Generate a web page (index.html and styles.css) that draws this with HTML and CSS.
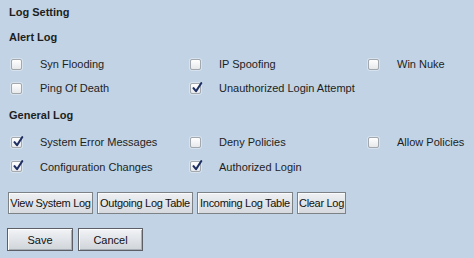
FILE: index.html
```html
<!DOCTYPE html>
<html>
<head>
<meta charset="utf-8">
<link rel="stylesheet" href="styles.css">
</head>
<body>
<div class="page">
  <div class="title">Log Setting</div>
  <div class="section">Alert Log</div>
  <div class="grid">
    <label class="item"><span class="cb"></span><span class="lbl">Syn Flooding</span></label>
    <label class="item"><span class="cb"></span><span class="lbl">IP Spoofing</span></label>
    <label class="item"><span class="cb"></span><span class="lbl">Win Nuke</span></label>
    <label class="item"><span class="cb"></span><span class="lbl">Ping Of Death</span></label>
    <label class="item"><span class="cb checked"><svg viewBox="0 0 12 12" width="12" height="12"><path d="M2.5 6.2 L5 9.2 L10.2 1.2" fill="none" stroke="#1d2e63" stroke-width="2.1" stroke-linejoin="round" stroke-linecap="round"/></svg></span><span class="lbl">Unauthorized Login Attempt</span></label>
    <span></span>
  </div>
  <div class="section gen">General Log</div>
  <div class="grid general">
    <label class="item"><span class="cb checked"><svg viewBox="0 0 12 12" width="12" height="12"><path d="M2.5 6.2 L5 9.2 L10.2 1.2" fill="none" stroke="#1d2e63" stroke-width="2.1" stroke-linejoin="round" stroke-linecap="round"/></svg></span><span class="lbl">System Error Messages</span></label>
    <label class="item"><span class="cb"></span><span class="lbl">Deny Policies</span></label>
    <label class="item"><span class="cb"></span><span class="lbl">Allow Policies</span></label>
    <label class="item"><span class="cb checked"><svg viewBox="0 0 12 12" width="12" height="12"><path d="M2.5 6.2 L5 9.2 L10.2 1.2" fill="none" stroke="#1d2e63" stroke-width="2.1" stroke-linejoin="round" stroke-linecap="round"/></svg></span><span class="lbl">Configuration Changes</span></label>
    <label class="item"><span class="cb checked"><svg viewBox="0 0 12 12" width="12" height="12"><path d="M2.5 6.2 L5 9.2 L10.2 1.2" fill="none" stroke="#1d2e63" stroke-width="2.1" stroke-linejoin="round" stroke-linecap="round"/></svg></span><span class="lbl">Authorized Login</span></label>
    <span></span>
  </div>
  <div class="tools">
    <button class="tbtn w84">View System Log</button>
    <button class="tbtn w96">Outgoing Log Table</button>
    <button class="tbtn w96">Incoming Log Table</button>
    <button class="tbtn w48">Clear Log</button>
  </div>
  <div class="actions">
    <button class="abtn save">Save</button>
    <button class="abtn cancel">Cancel</button>
  </div>
</div>
</body>
</html>
```

FILE: styles.css
```css
html, body {
  margin: 0;
  padding: 0;
}
body {
  background: #c1d3e4;
  font-family: "Liberation Sans", Arial, sans-serif;
  font-size: 11px;
  color: #1e1e1e;
  width: 474px;
  height: 258px;
  overflow: hidden;
}
.page {
  padding: 0 0 0 9px;
}
.title {
  font-weight: bold;
  height: 24px;
  line-height: 24px;
}
.section {
  font-weight: bold;
  height: 25px;
  line-height: 25px;
  margin-top: 1px;
}
.section.gen {
  margin-top: 3px;
}
.grid {
  display: grid;
  grid-template-columns: 179px 178px auto;
  grid-template-rows: 24px 24px;
  padding-left: 2px;
  margin-top: 2px;
}
.grid.general {
  grid-template-rows: 24px 25px;
}
.item {
  display: flex;
  align-items: center;
  gap: 18px;
  white-space: nowrap;
}
.cb {
  position: relative;
  width: 9px;
  height: 9px;
  border: 1px solid #a3a8ae;
  border-radius: 2px;
  background: linear-gradient(#ffffff, #e6e8ea);
  box-shadow: 0 0 0 1px rgba(255,255,255,0.35);
  flex: none;
}
.cb svg {
  position: absolute;
  left: 0;
  top: -2px;
}
.tools {
  display: flex;
  gap: 4px;
  margin-top: 13px;
  margin-left: -1px;
}
button {
  font-family: "Liberation Sans", Arial, sans-serif;
  font-size: 11px;
  color: #111;
  margin: 0;
  cursor: default;
}
.tbtn {
  height: 22px;
  padding: 0;
  border: 1px solid #7d8287;
  border-radius: 0;
  background: linear-gradient(#eef0f2, #d6dadf);
  box-shadow: inset 1px 1px 0 #fafbfc;
  white-space: nowrap;
  letter-spacing: -0.3px;
}
.w84 { width: 85px; }
.w96 { width: 96px; }
.w48 { width: 49px; }
.actions {
  display: flex;
  gap: 5px;
  margin-top: 14px;
  margin-left: -2px;
}
.abtn {
  height: 23px;
  padding: 0;
  border: 1px solid #5c6066;
  border-radius: 0;
  background: linear-gradient(#f2f4f6, #cfd4da);
  box-shadow: inset 1px 1px 0 #ffffff, inset -1px -1px 0 #a9aeb4;
}
.save { width: 66px; }
.cancel { width: 65px; }
```
